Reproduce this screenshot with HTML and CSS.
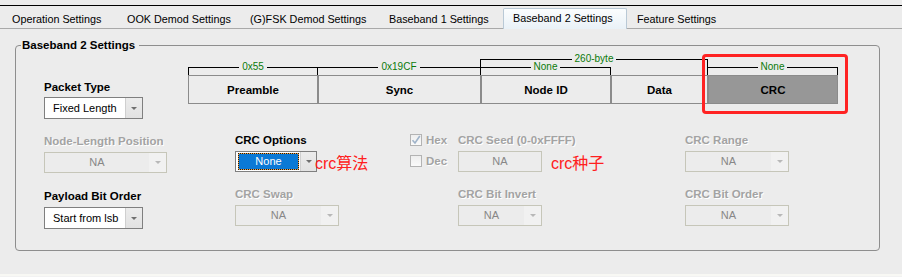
FILE: index.html
```html
<!DOCTYPE html>
<html>
<head>
<meta charset="utf-8">
<link rel="stylesheet" href="styles.css">
</head>
<body>
<div class="topline"></div>
<nav class="tabs">
  <div class="tab t1">Operation Settings</div>
  <div class="tab t2">OOK Demod Settings</div>
  <div class="tab t3">(G)FSK Demod Settings</div>
  <div class="tab t4">Baseband 1 Settings</div>
  <div class="tab t5 active">Baseband 2 Settings</div>
  <div class="tab t6">Feature Settings</div>
</nav>
<fieldset class="group">
  <legend>Baseband 2 Settings</legend>
  <div class="content">
    <div class="top">
      <div class="ptype">
        <div class="lbl">Packet Type</div>
        <div class="sel en w99"><span class="val">Fixed Length</span><span class="btn"><i></i></span></div>
      </div>
      <div class="diagram">
        <div class="seg s-pre first">
          <div class="brk"><p class="lab"><span>0x55</span></p></div>
          <div class="box">Preamble</div>
        </div>
        <div class="seg s-sync">
          <div class="brk"><p class="lab"><span>0x19CF</span></p></div>
          <div class="box">Sync</div>
        </div>
        <div class="grp">
          <div class="brk outer"><p class="lab"><span>260-byte</span></p></div>
          <div class="grp-row">
            <div class="seg s-node">
              <div class="brk"><p class="lab"><span>None</span></p></div>
              <div class="box">Node ID</div>
            </div>
            <div class="seg s-data">
              <div class="brk"></div>
              <div class="box">Data</div>
            </div>
          </div>
        </div>
        <div class="seg s-crc">
          <div class="brk"><p class="lab"><span>None</span></p></div>
          <div class="box crc">CRC</div>
        </div>
        <div class="highlight"></div>
      </div>
    </div>

    <div class="grid">
      <div class="cell c1 r2">
        <div class="lbl dis">Node-Length Position</div>
        <div class="sel dis w123"><span class="val">NA</span><span class="btn"><i></i></span></div>
      </div>
      <div class="cell">
        <div class="lbl">CRC Options</div>
        <div class="line">
          <div class="sel en focus w82"><span class="val"><span class="hl">None</span></span><span class="btn"><i></i></span></div>
          <span class="note n1">crc算法</span>
        </div>
      </div>
      <div class="cell c3">
        <div class="checks">
          <div class="chk"><span class="cb"><svg width="10" height="10" viewBox="0 0 10 10"><path d="M1.5 5.2 L4 8 L8.8 1" fill="none" stroke="#9fb3c9" stroke-width="1.6"/></svg></span><span class="lbl dis">Hex</span></div>
          <div class="chk dec"><span class="cb"></span><span class="lbl dis">Dec</span></div>
        </div>
        <div class="seed">
          <div class="lbl dis">CRC Seed (0-0xFFFF)</div>
          <div class="line">
            <div class="inp w84">NA</div>
            <span class="note n2">crc种子</span>
          </div>
        </div>
      </div>
      <div class="cell">
        <div class="lbl dis">CRC Range</div>
        <div class="sel dis w104"><span class="val">NA</span><span class="btn"><i></i></span></div>
      </div>

      <div class="cell c1 r3">
        <div class="lbl">Payload Bit Order</div>
        <div class="sel en w99"><span class="val">Start from lsb</span><span class="btn"><i></i></span></div>
      </div>
      <div class="cell">
        <div class="lbl dis">CRC Swap</div>
        <div class="sel dis w104"><span class="val">NA</span><span class="btn"><i></i></span></div>
      </div>
      <div class="cell c3b">
        <div class="lbl dis">CRC Bit Invert</div>
        <div class="sel dis w84"><span class="val">NA</span><span class="btn"><i></i></span></div>
      </div>
      <div class="cell">
        <div class="lbl dis">CRC Bit Order</div>
        <div class="sel dis w104"><span class="val">NA</span><span class="btn"><i></i></span></div>
      </div>
    </div>
  </div>
</fieldset>
<div class="footer"></div>
</body>
</html>
```

FILE: styles.css
```css
html, body {
  margin: 0;
  padding: 0;
  background: #ececec;
  font-family: "Liberation Sans", Arial, sans-serif;
  color: #000;
  width: 902px;
  height: 277px;
  overflow: hidden;
}

.topline {
  height: 5px;
  border-bottom: 1px solid #000;
}

/* tabs */
.tabs {
  display: flex;
  align-items: flex-end;
  height: 22px;
  padding-left: 2px;
  border-bottom: 1px solid #a9a9a9;
  font-size: 10.8px;
}
.tab {
  box-sizing: border-box;
  height: 22px;
  padding: 6px 0 0 10px;
  line-height: 14px;
  white-space: nowrap;
}
.t1 { width: 115px; }
.t2 { width: 123px; }
.t3 { width: 139px; }
.t4 { width: 124px; }
.t5 { width: 124px; }
.t6 { width: 110px; }
.tab.active {
  height: 21px;
  margin-bottom: -1px;
  padding: 2px 0 0 9px;
  border: 1px solid #b9c9d6;
  border-bottom: none;
  border-radius: 2px 2px 0 0;
  background: linear-gradient(#fbfdfe, #e9f1f7);
}

/* group box */
.group {
  box-sizing: border-box;
  width: 865px;
  margin: 9px 0 0 15px;
  padding: 0 0 21px 0;
  border: 1px solid #8e8e8e;
  border-radius: 4px;
  min-width: 0;
}
.group legend {
  margin-left: 5px;
  padding: 0 4px 0 1px;
  font-weight: bold;
  font-size: 11.5px;
  line-height: 14px;
}
.content {
  padding-left: 28px;
}

.top {
  display: flex;
  align-items: flex-start;
}
.ptype {
  width: 144px;
  margin-top: 28px;
}

.lbl {
  font-weight: bold;
  font-size: 11.5px;
  line-height: 14px;
  margin-bottom: 3px;
  white-space: nowrap;
}
.lbl.dis {
  color: #a3a3a3;
  text-shadow: 1px 1px 0 #fff;
}

/* selects */
.sel {
  box-sizing: border-box;
  display: flex;
  height: 21px;
  border: 1px solid #7f7f7f;
  font-size: 11px;
}
.sel .val {
  flex: 1;
  line-height: 19px;
  white-space: nowrap;
}
.sel .btn {
  width: 16px;
  display: flex;
  align-items: center;
  justify-content: center;
}
.sel .btn i {
  width: 0;
  height: 0;
  border-left: 3px solid transparent;
  border-right: 3px solid transparent;
  border-top: 3px solid #6f6f6f;
}
.sel.en {
  background: #fff;
}
.sel.en .val {
  padding-left: 8px;
}
.sel.en .btn {
  border-left: 1px solid #cfcfcf;
  background: linear-gradient(#ececec, #e2e2e2);
}
.ptype .sel, .r3 .sel {
  height: 22px;
}
.ptype .sel .val, .r3 .sel .val {
  line-height: 20px;
}
.sel.dis {
  border-color: #c6c6b9;
  background: #ececec;
}
.sel.dis .val {
  text-align: center;
  color: #878787;
}
.sel.dis .btn {
  width: 17px;
  background: #f1f1f1;
}
.sel.dis .btn i {
  border-top-color: #b8b8b8;
}

.sel.focus .val {
  padding: 1px 0 0 2px;
}
.sel.focus .btn {
  width: 15px;
}
.hl {
  box-sizing: border-box;
  display: block;
  width: 61px;
  height: 17px;
  line-height: 15px;
  text-align: center;
  color: #fff;
  border: 1px dotted #1a1a1a;
  background: linear-gradient(#0a79d6, #0a79d6) padding-box, linear-gradient(#f0a040, #f0a040) border-box;
}

.w82 { width: 82px; }
.w84 { width: 84px; }
.w99 { width: 99px; }
.w104 { width: 104px; }
.w123 { width: 123px; }

/* diagram */
.diagram {
  position: relative;
  display: flex;
  align-items: flex-end;
  margin-top: 7px;
}
.seg {
  display: flex;
  flex-direction: column;
}
.s-pre { width: 130px; }
.s-sync { width: 163px; }
.s-node { width: 130px; }
.s-data { width: 97px; }
.s-crc { width: 130px; }
.grp {
  display: flex;
  flex-direction: column;
  width: 227px;
}
.grp-row {
  display: flex;
}
.brk {
  box-sizing: border-box;
  height: 8px;
  border-top: 1px solid #000;
  border-right: 1px solid #000;
}
.s-data .brk {
  border-top: none;
}
.first .brk {
  border-left: 1px solid #000;
}
.brk.outer {
  border-left: 1px solid #000;
  margin-left: -1px;
}
.lab {
  margin: -7px 0 0 0;
  text-align: center;
  font-size: 10px;
  line-height: 12px;
  color: #0a7a0a;
  white-space: nowrap;
}
.lab span {
  background: #ececec;
  padding: 0 3px;
}
.box {
  box-sizing: border-box;
  height: 29px;
  border: 1px solid #8b8b8b;
  display: flex;
  align-items: center;
  justify-content: center;
  font-weight: bold;
  font-size: 11.5px;
}
.box.crc {
  background: #979797;
}
.highlight {
  position: absolute;
  left: 514px;
  top: -5px;
  width: 146px;
  height: 60px;
  box-sizing: border-box;
  border: 3px solid #ff2323;
  border-radius: 4px;
}

/* grid of fields */
.grid {
  display: grid;
  grid-template-columns: 191px 175px 275px 1fr;
  row-gap: 13px;
  margin-top: 14px;
}
.cell .lbl {
  margin-bottom: 4px;
}
.c1.r2 { margin-top: 1px; }
.c1.r3 { margin-top: 2px; }
.line {
  display: flex;
  align-items: flex-start;
}
.note {
  font-family: "Liberation Sans", "Noto Sans CJK SC", sans-serif;
  font-size: 16px;
  line-height: 20px;
  color: #ff2020;
  margin-top: 3px;
  white-space: nowrap;
}
.n1 { margin-left: -2px; }
.n2 { margin-left: 9px; }

.c3 {
  display: flex;
}
.c3b {
  padding-left: 48px;
}
.checks {
  width: 48px;
}
.chk {
  display: flex;
  align-items: center;
  height: 14px;
}
.chk.dec {
  margin-top: 7px;
}
.chk .lbl {
  margin: 0 0 0 4px;
}
.cb {
  box-sizing: border-box;
  width: 12px;
  height: 12px;
  border: 1px solid #b3b3b3;
  background: linear-gradient(#eeeeee, #fafafa);
  display: flex;
  align-items: center;
  justify-content: center;
}
.inp {
  box-sizing: border-box;
  height: 21px;
  border: 1px solid #c6c6b9;
  background: #ececec;
  text-align: center;
  font-size: 11px;
  line-height: 19px;
  color: #878787;
}

.footer {
  margin-top: 23px;
  height: 4px;
  border-top: 2px solid #f8f8f4;
  background: #f2f2f2;
}
```
